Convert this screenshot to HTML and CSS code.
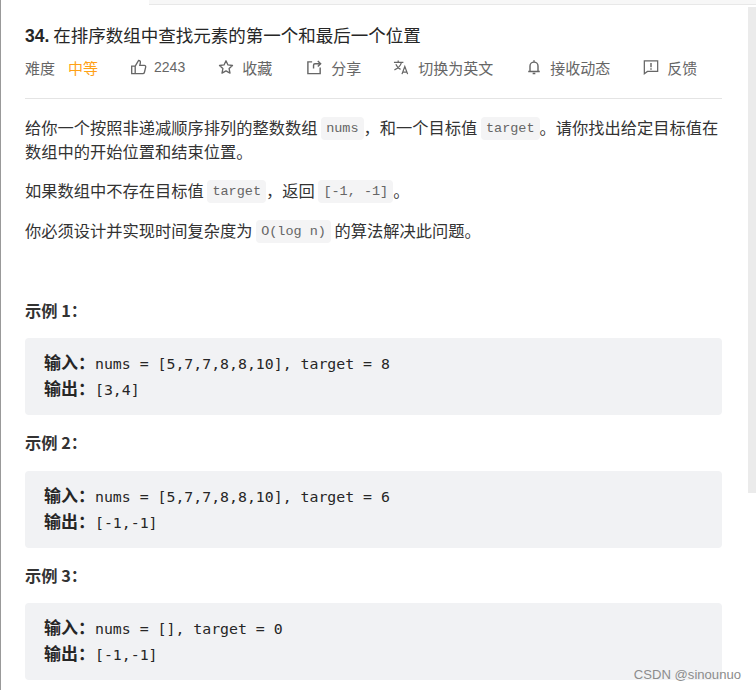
FILE: index.html
```html
<!DOCTYPE html>
<html lang="zh-CN">
<head>
<meta charset="utf-8">
<title>34. 在排序数组中查找元素的第一个和最后一个位置</title>
<link rel="stylesheet" href="styles.css">
</head>
<body>
<div class="topstrip"></div>
<div class="scrollbar"></div>
<main class="page">
  <h1 class="title"><b class="num">34.</b> 在排序数组中查找元素的第一个和最后一个位置</h1>
  <div class="meta">
    <span class="diff">难度<em>中等</em></span>
    <span class="act like"><svg viewBox="0 0 18 18" width="17" height="17"><path d="M5.500 7.500l3.600-6c1.300 0 2.100 1 1.900 2.300l-.6 3h4.800c1 0 1.600.8 1.400 1.800l-1.300 5.400c-.2.800-.8 1.500-1.700 1.500H1.800v-8z M5.500 7.500v8" fill="none" stroke="#666" stroke-width="1.400"/></svg>2243</span>
    <span class="act fav"><svg viewBox="0 0 18 18" width="16" height="16"><path d="M9 2l2.200 4.700 5.100.6-3.800 3.500 1 5.100L9 13.400l-4.500 2.500 1-5.100L1.700 7.300l5.100-.6z" fill="none" stroke="#666" stroke-width="1.500" stroke-linejoin="round"/></svg>收藏</span>
    <span class="act share"><svg viewBox="0 0 18 18" width="17" height="17"><path d="M6.500 3H2v12.500h13V9M8 10V6.500c0-1 .6-1.500 1.500-1.500H15.500M12.500 2L15.500 5l-3 3" fill="none" stroke="#666" stroke-width="1.500"/></svg>分享</span>
    <span class="act lang"><svg viewBox="0 0 18 18" width="17" height="17"><path d="M1 3.500h10M5.500 1.500v2M9 3.500C8 7 5 10 1.500 11.500M3 5.500c1 2.500 3 4.500 5 5.500M9.500 16l3-8 3 8M10.500 13.800h4.500" fill="none" stroke="#666" stroke-width="1.300"/></svg>切换为英文</span>
    <span class="act bell"><svg viewBox="0 0 18 18" width="16" height="16"><path d="M2.500 14h13M4.500 14V8a4.500 4.500 0 0 1 9 0v6M7.500 16.300h3M9 1.500v2" fill="none" stroke="#666" stroke-width="1.600"/></svg>接收动态</span>
    <span class="act back"><svg viewBox="0 0 18 18" width="16" height="16"><path d="M1.500 2h15v12H5l-3.500 2.500z" fill="none" stroke="#666" stroke-width="1.400"/><path d="M9 4.500v4.700M9 10.400v1.600" stroke="#666" stroke-width="1.600"/></svg>反馈</span>
  </div>
  <div class="content">
    <p>给你一个按照非递减顺序排列的整数数组 <code>nums</code>，和一个目标值 <code>target</code>。请你找出给定目标值在数组中的开始位置和结束位置。</p>
    <p>如果数组中不存在目标值 <code>target</code>，返回 <code>[-1, -1]</code>。</p>
    <p>你必须设计并实现时间复杂度为 <code>O(log n)</code> 的算法解决此问题。</p>
    <h2 class="ex first">示例 1：</h2>
    <pre><strong>输入：</strong>nums = [5,7,7,8,8,10], target = 8
<strong>输出：</strong>[3,4]</pre>
    <h2 class="ex">示例 2：</h2>
    <pre><strong>输入：</strong>nums = [5,7,7,8,8,10], target = 6
<strong>输出：</strong>[-1,-1]</pre>
    <h2 class="ex">示例 3：</h2>
    <pre><strong>输入：</strong>nums = [], target = 0
<strong>输出：</strong>[-1,-1]</pre>
  </div>
</main>
<div class="watermark">CSDN @sinounuo</div>
</body>
</html>
```
FILE: styles.css
```css
html, body { margin: 0; padding: 0; height: 690px; overflow: hidden; background: #fff; }
body {
  font-family: "Noto Sans CJK SC", "Liberation Sans", sans-serif;
  color: #333;
  border-left: 1px solid #999;
  box-sizing: border-box;
  position: relative;
}
.topstrip { position: absolute; left: 148px; right: 0; top: 0; height: 4px; background: #f7f7f7; border-bottom: 1px solid #e8e8e8; }
.scrollbar { position: absolute; right: 0; top: 7px; width: 8px; height: 486px; background: #ebebeb; }
.page { padding: 22px 34px 0 24px; }
.title { margin: 0; font-size: 17.5px; line-height: 26px; font-weight: 400; color: #262626; white-space: nowrap; }
.num { font-family: "Liberation Sans", sans-serif; font-weight: 700; }
.meta { display: flex; align-items: center; height: 24px; margin-top: 6px; padding-bottom: 19px; border-bottom: 1px solid #e4e4e4; font-size: 15px; color: #666; white-space: nowrap; }
.diff em { font-style: normal; color: #ffa116; margin-left: 13px; }
.act { display: flex; align-items: center; gap: 8px; }
.like { margin-left: 32px; gap: 7px; font-family: "Liberation Sans", sans-serif; font-size: 14px; }
.fav { margin-left: 33px; }
.share { margin-left: 34px; }
.lang { margin-left: 32px; }
.bell { margin-left: 33px; }
.back { margin-left: 33px; }
.content { font-size: 16.25px; line-height: 24px; }
.content p { margin: 15px 0; }
.content p:first-child { margin-top: 16px; }
.content p:last-of-type { margin-top: 16px; }
code { font-family: "Liberation Mono", monospace; font-size: 13.5px; line-height: 1; color: #666; background: #f4f4f5; border-radius: 4px; padding: 4px 5px; vertical-align: 2px; }
.ex { margin: 15.25px 0 16.25px; font-size: 16.25px; line-height: 24px; font-weight: 700; color: #333; }
.ex.first { margin-top: 55.9px; }
pre { margin: 0; padding: 13px 19px 12px; height: 52px; background: #f1f2f4; border-radius: 4px; font-family: "DejaVu Sans Mono", monospace; font-size: 14.85px; line-height: 26px; color: #262626; }
pre strong { font-family: "Noto Sans CJK SC", sans-serif; font-size: 17px; line-height: 1; font-weight: 700; }
.watermark { position: absolute; right: 15px; top: 667px; font-family: "Liberation Sans", sans-serif; font-size: 13.1px; line-height: 16px; color: #8c8c8c; }
```
